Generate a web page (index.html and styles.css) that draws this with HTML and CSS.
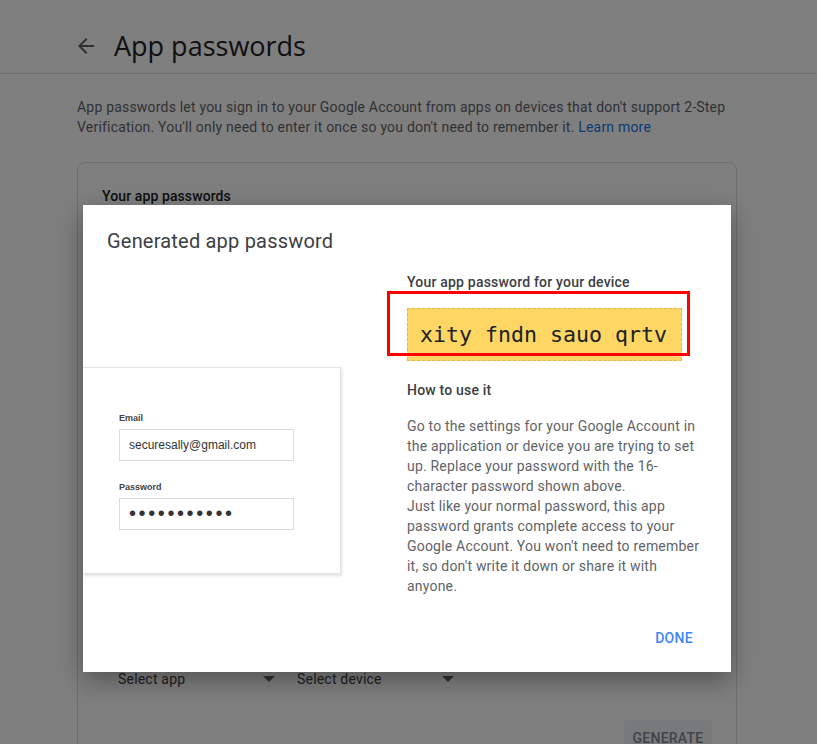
FILE: index.html
```html
<!DOCTYPE html>
<html lang="en">
<head>
<meta charset="utf-8">
<title>App passwords</title>
<link rel="stylesheet" href="styles.css">
</head>
<body>
<header class="topbar">
  <div class="topbar-inner">
    <svg class="back" width="24" height="24" viewBox="0 0 24 24"><path d="M20 11H7.83l5.59-5.59L12 4l-8 8 8 8 1.41-1.41L7.83 13H20v-2z" fill="#5f6368"/></svg>
    <h1 class="page-title">App passwords</h1>
  </div>
</header>
<main class="content">
  <p class="intro">App passwords let you sign in to your Google Account from apps on devices that don't support 2-Step Verification. You'll only need to enter it once so you don't need to remember it. <a class="link" href="#">Learn more</a></p>
  <section class="card">
    <h2 class="card-title">Your app passwords</h2>
    <p class="card-text">You don't have any app passwords.</p>
    <p class="card-text">Select the app and device you want to generate the app password for.</p>
    <div class="selects">
      <div class="select"><span>Select app</span><i class="caret"></i></div>
      <div class="select"><span>Select device</span><i class="caret"></i></div>
    </div>
    <div class="card-actions">
      <button class="gen-btn">GENERATE</button>
    </div>
  </section>
</main>

<div class="scrim"></div>

<div class="dialog">
  <h2 class="dialog-title">Generated app password</h2>
  <div class="dialog-body">
    <div class="dialog-left">
      <div class="illus">
        <div class="ill-label">Email</div>
        <div class="ill-input">securesally@gmail.com</div>
        <div class="ill-label second">Password</div>
        <div class="ill-input dots">•••••••••••</div>
      </div>
    </div>
    <div class="dialog-right">
      <div class="label">Your app password for your device</div>
      <div class="pw-box">xity fndn sauo qrtv</div>
      <div class="label howto">How to use it</div>
      <p class="howto-text">Go to the settings for your Google Account in the application or device you are trying to set up. Replace your password with the 16-character password shown above.<br>Just like your normal password, this app password grants complete access to your Google Account. You won't need to remember it, so don't write it down or share it with anyone.</p>
    </div>
  </div>
  <div class="dialog-actions">
    <button class="done-btn">DONE</button>
  </div>
  <div class="highlight"></div>
</div>
</body>
</html>
```

FILE: styles.css
```css
* { box-sizing: border-box; }
html, body { margin: 0; padding: 0; }
body {
  font-family: Roboto, "Liberation Sans", Arial, sans-serif;
  background: #ffffff;
  color: #202124;
  width: 817px;
  height: 744px;
  overflow: hidden;
  position: relative;
  letter-spacing: 0.2px;
}
.topbar {
  height: 74px;
  border-bottom: 1px solid #dadce0;
}
.topbar-inner {
  display: flex;
  align-items: center;
  height: 73px;
  padding: 28px 0 9px 74px;
}
.back { display: block; flex: none; }
.page-title {
  margin: 0 0 0 16px;
  font-family: "Open Sans", Roboto, sans-serif;
  font-weight: 400;
  font-size: 27px;
  letter-spacing: 0;
  color: #202124;
  line-height: 36px;
}
.content {
  width: 660px;
  margin-left: 77px;
}
.intro {
  margin: 23px 0 0 0;
  font-size: 14px;
  line-height: 20px;
  color: #5f6368;
}
.link { color: #1a73e8; text-decoration: none; }
.card {
  margin-top: 25px;
  border: 1px solid #dadce0;
  border-radius: 8px;
  padding: 23px 24px 0 24px;
  height: 600px;
}
.card-title {
  margin: 0;
  font-size: 14px;
  line-height: 20px;
  font-weight: 500;
  letter-spacing: 0.1px;
  color: #202124;
}
.card-text {
  margin: 24px 0 0 0;
  font-size: 14px;
  line-height: 20px;
  color: #5f6368;
}
.selects {
  display: flex;
  gap: 22px;
  margin-top: 373px;
  padding-left: 16px;
}
.select {
  width: 157px;
  height: 24px;
  display: flex;
  align-items: center;
  justify-content: space-between;
  font-size: 14px;
  color: #3c4043;
}
.caret {
  width: 0; height: 0;
  border-left: 6px solid transparent;
  border-right: 6px solid transparent;
  border-top: 6px solid #5f6368;
}
.card-actions {
  display: flex;
  justify-content: flex-end;
  margin-top: 29px;
}
.gen-btn {
  height: 36px;
  padding: 0 8px;
  border: 0;
  border-radius: 4px;
  background: #f1f3f4;
  color: #80868b;
  font-family: Roboto, sans-serif;
  font-size: 14px;
  font-weight: 500;
  letter-spacing: 0.25px;
  width: 88px;
}
.scrim {
  position: absolute;
  inset: 0;
  background: rgba(0,0,0,0.5);
}
.dialog {
  position: absolute;
  left: 83px;
  top: 205px;
  width: 648px;
  height: 467px;
  background: #fff;
  box-shadow: 0 8px 24px rgba(0,0,0,0.35);
  overflow: hidden;
}
.dialog-title {
  margin: 0;
  padding: 24px 24px 0 24px;
  font-size: 20px;
  line-height: 24px;
  font-weight: 400;
  letter-spacing: 0.2px;
  color: #3c4043;
}
.dialog-body {
  display: flex;
  margin-top: 19px;
}
.dialog-left {
  width: 324px;
  flex: none;
  padding-top: 95px;
}
.illus {
  width: 258px;
  height: 207px;
  border: 1px solid #e3e3e3;
  border-left: 0;
  box-shadow: 1px 2px 3px rgba(0,0,0,0.12);
  padding: 44px 0 0 36px;
  font-family: "Liberation Sans", Arial, sans-serif;
  letter-spacing: 0;
}
.ill-label {
  font-size: 9px;
  line-height: 12px;
  font-weight: 700;
  color: #444;
}
.ill-label.second { margin-top: 20px; }
.ill-input {
  margin-top: 5px;
  width: 175px;
  height: 32px;
  border: 1px solid #dcdcdc;
  padding-left: 9px;
  font-size: 12px;
  line-height: 30px;
  color: #333;
}
.ill-input.dots {
  font-size: 20px;
  letter-spacing: 2.6px;
  line-height: 29px;
  color: #333;
}
.dialog-right {
  width: 298px;
}
.label {
  font-size: 14px;
  line-height: 20px;
  font-weight: 500;
  color: #3c4043;
}
.pw-box {
  margin-top: 16px;
  width: 275px;
  height: 53px;
  background: #fdd663;
  border: 1px dashed #e4b84c;
  font-family: "DejaVu Sans Mono", "Liberation Mono", monospace;
  font-size: 21.6px;
  letter-spacing: 0;
  line-height: 51px;
  padding-left: 12px;
  color: #202124;
  white-space: nowrap;
}
.label.howto { margin-top: 19px; }
.howto-text {
  margin: 16px 0 0 0;
  font-size: 14px;
  line-height: 20px;
  color: #5f6368;
}
.dialog-actions {
  display: flex;
  justify-content: flex-end;
  padding: 0 30px 0 0;
  margin-top: 24px;
}
.done-btn {
  height: 36px;
  padding: 0 8px;
  border: 0;
  background: transparent;
  color: #4285f4;
  font-family: Roboto, sans-serif;
  font-size: 14px;
  font-weight: 500;
  letter-spacing: 0.3px;
}
.highlight {
  position: absolute;
  left: 304px;
  top: 86px;
  width: 303px;
  height: 65px;
  border: 3px solid #ff0000;
}
```
